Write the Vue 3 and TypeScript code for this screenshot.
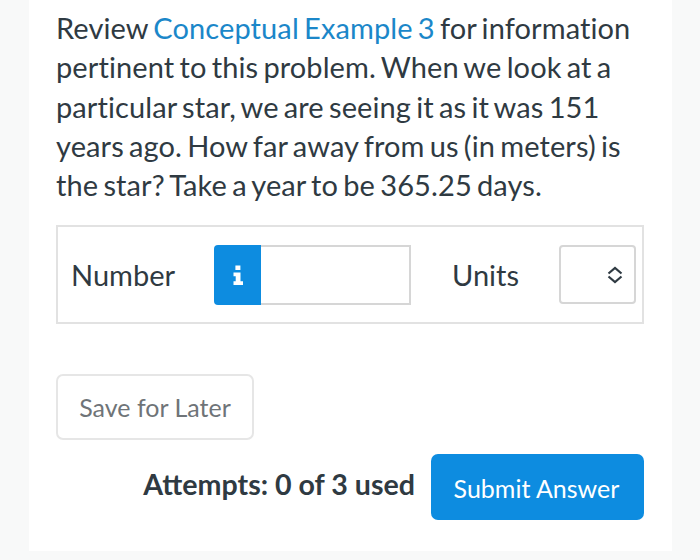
<script setup lang="ts">
const attempts: string = 'Attempts: 0 of 3 used'
</script>

<template>
  <div class="page">
    <main class="panel">
      <p class="question">Review <a class="link">Conceptual Example 3</a> for information pertinent to this problem. When we look at a particular star, we are seeing it as it was 151 years ago. How far away from us (in meters) is the star? Take a year to be 365.25 days.</p>
      <section class="answer">
        <span class="label">Number</span>
        <div class="field">
          <span class="info">
            <svg width="10" height="20" viewBox="0 0 10 20">
              <rect x="2.4" y="0.5" width="5" height="4.5" fill="#fff" />
              <path d="M0.5 7.5h7v8.7H10V20H0.5v-3.8h2.2v-5H0.5z" fill="#fff" />
            </svg>
          </span>
          <span class="input"></span>
        </div>
        <span class="label units">Units</span>
        <div class="select">
          <svg width="16" height="18" viewBox="0 0 16 18" fill="none" stroke="#2f3a42" stroke-width="2.2">
            <path d="M1.5 7.5 8 2l6.5 5.5" />
            <path d="M1.5 10.5 8 16l6.5-5.5" />
          </svg>
        </div>
      </section>
      <button class="save">Save for Later</button>
      <footer class="actions">
        <span class="attempts">{{ attempts }}</span>
        <button class="submit">Submit Answer</button>
      </footer>
    </main>
  </div>
</template>

<style>
html, body { margin: 0; background: #f8f9f9; }
</style>

<style scoped>
.page {
  width: 700px;
  height: 560px;
  overflow: hidden;
  background: #f8f9f9;
  font-family: Lato, "Liberation Sans", sans-serif;
  color: #2f3a42;
}
.panel {
  box-sizing: border-box;
  width: 643px;
  height: 551px;
  margin-left: 29px;
  padding: 8px 28px 0 27px;
  background: #fff;
}
.question {
  margin: 0;
  font-size: 29px;
  line-height: 39.25px;
  letter-spacing: 0.1px;
  word-spacing: -2.3px;
}
.link { color: #1b87c9; }
.answer {
  box-sizing: border-box;
  display: flex;
  align-items: center;
  width: 588px;
  height: 99px;
  margin-top: 21px;
  padding: 0 6px 0 13px;
  border: 2px solid #e2e2e2;
}
.label { font-size: 29px; color: #2f3a42; }
.field {
  display: flex;
  width: 197px;
  height: 60px;
  margin-left: 39px;
}
.info {
  display: flex;
  align-items: center;
  justify-content: center;
  width: 47px;
  background: #0d8ce0;
  border-radius: 4px 0 0 4px;
}
.input {
  flex: 1;
  border: 2px solid #d6d6d6;
  border-left: 0;
}
.units { margin-left: 41px; }
.select {
  box-sizing: border-box;
  display: flex;
  align-items: center;
  justify-content: flex-end;
  width: 77px;
  height: 59px;
  margin-left: auto;
  padding-right: 11px;
  border: 2px solid #d6d6d6;
  border-radius: 4px;
}
.save {
  display: block;
  box-sizing: border-box;
  width: 198px;
  height: 66px;
  margin-top: 50px;
  border: 2px solid #e6e6e6;
  border-radius: 7px;
  background: #fff;
  font: 25px Lato, "Liberation Sans", sans-serif;
  color: #6f7478;
}
.actions {
  display: flex;
  align-items: center;
  justify-content: flex-end;
  width: 588px;
  margin-top: 14px;
  gap: 16px;
}
.attempts {
  font-size: 28.6px;
  font-weight: 700;
  position: relative;
  top: -3px;
}
.submit {
  box-sizing: border-box;
  width: 213px;
  height: 66px;
  padding: 2px 8px 0 6px;
  border: 0;
  border-radius: 7px;
  background: #0d8ce0;
  font: 25px Lato, "Liberation Sans", sans-serif;
  color: #fff;
}
</style>
